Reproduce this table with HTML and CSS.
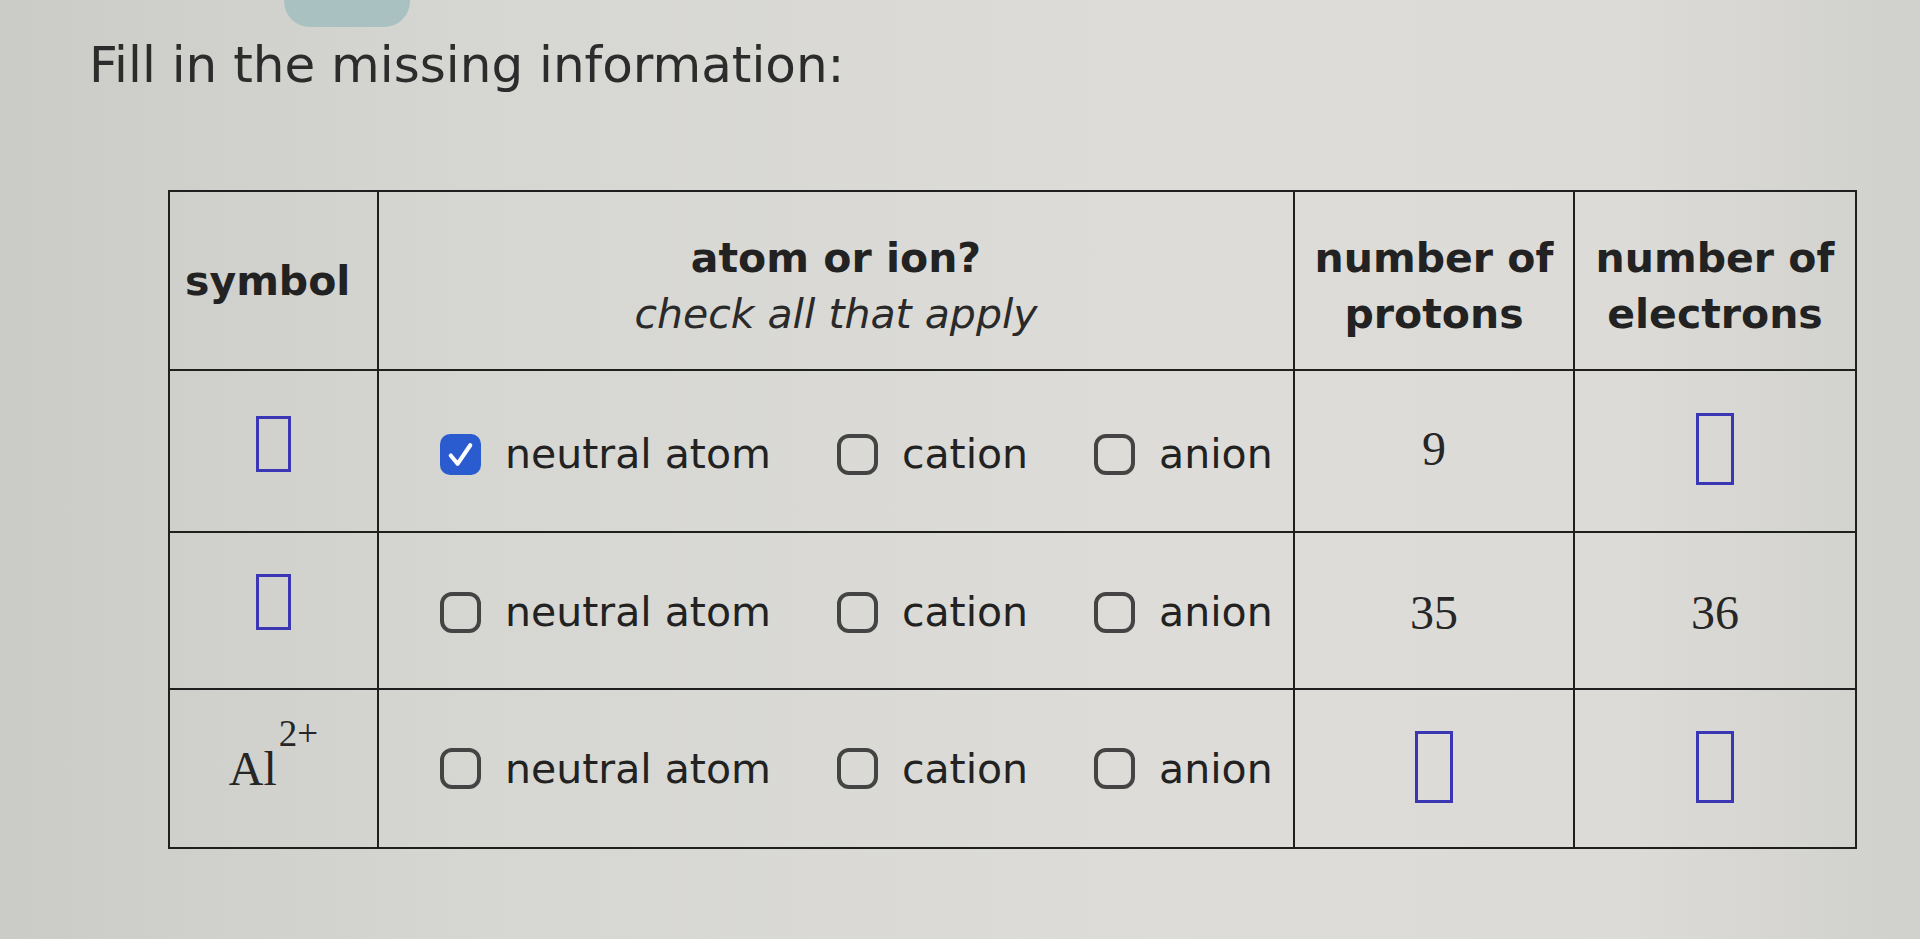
FILE: index.html
```html
<!DOCTYPE html>
<html lang="en">
<head>
<meta charset="utf-8">
<title>Fill in the missing information</title>
<link rel="stylesheet" href="styles.css">
</head>
<body>
<div class="tab"></div>
<h1 class="title">Fill in the missing information:</h1>
<table class="grid">
  <colgroup>
    <col class="c-sym"><col class="c-kind"><col class="c-pro"><col class="c-ele">
  </colgroup>
  <tr class="head">
    <th class="sym-head">symbol</th>
    <th>atom or ion?<br><span class="hint">check all that apply</span></th>
    <th>number of<br>protons</th>
    <th>number of<br>electrons</th>
  </tr>
  <tr class="r1">
    <td class="center"><span class="blank"></span></td>
    <td>
      <div class="opts">
        <label class="opt"><span class="cb checked"><svg viewBox="0 0 42 42" width="42" height="42"><path d="M11 21.5 L18 30 L31 11" fill="none" stroke="#fff" stroke-width="4.2" stroke-linecap="round" stroke-linejoin="round"/></svg></span>neutral atom</label>
        <label class="opt"><span class="cb"></span>cation</label>
        <label class="opt"><span class="cb"></span>anion</label>
      </div>
    </td>
    <td class="center num">9</td>
    <td class="center"><span class="blank tall"></span></td>
  </tr>
  <tr class="r2">
    <td class="center"><span class="blank"></span></td>
    <td>
      <div class="opts">
        <label class="opt"><span class="cb"></span>neutral atom</label>
        <label class="opt"><span class="cb"></span>cation</label>
        <label class="opt"><span class="cb"></span>anion</label>
      </div>
    </td>
    <td class="center num">35</td>
    <td class="center num">36</td>
  </tr>
  <tr class="r3">
    <td class="center num"><span class="ion">Al<sup class="charge">2+</sup></span></td>
    <td>
      <div class="opts">
        <label class="opt"><span class="cb"></span>neutral atom</label>
        <label class="opt"><span class="cb"></span>cation</label>
        <label class="opt"><span class="cb"></span>anion</label>
      </div>
    </td>
    <td class="center"><span class="blank tall"></span></td>
    <td class="center"><span class="blank tall"></span></td>
  </tr>
</table>
</body>
</html>
```
FILE: styles.css
```css
html, body {
  margin: 0;
  padding: 0;
}
body {
  width: 1920px;
  height: 939px;
  overflow: hidden;
  background: linear-gradient(to right, #cbcbc7 0%, #d6d6d2 25%, #dddcd8 60%, #dcdbd7 85%, #d0d0cc 100%);
  font-family: "DejaVu Sans", "Liberation Sans", sans-serif;
  color: #252525;
}
.tab {
  margin-left: 284px;
  width: 126px;
  height: 27px;
  background: #a9c1c0;
  border-radius: 0 0 26px 26px;
}
.title {
  margin: 8px 0 0 89px;
  font-size: 50px;
  line-height: 60px;
  font-weight: normal;
  color: #2c2c2c;
}
.grid {
  margin: 95px 0 0 168px;
  border-collapse: collapse;
  table-layout: fixed;
  width: 1687px;
}
.c-sym { width: 209px; }
.c-kind { width: 916px; }
.c-pro { width: 280px; }
.c-ele { width: 282px; }
.grid th, .grid td {
  border: 2px solid #1f1f1f;
  padding: 0 8px;
  vertical-align: middle;
}
.head th {
  height: 167px;
  font-size: 41px;
  line-height: 56px;
  font-weight: bold;
  text-align: center;
  color: #222;
  padding-top: 10px;
}
.head th.sym-head {
  text-align: left;
  padding-left: 15px;
  padding-top: 0;
}
.hint {
  font-weight: normal;
  font-style: italic;
  color: #2a2a2a;
}
.r1 td { height: 154px; padding-top: 6px; }
.r2 td { height: 152px; padding-top: 3px; }
.r3 td { height: 157px; }
.center { text-align: center; }
.num {
  font-family: "Liberation Serif", "Times New Roman", serif;
  font-size: 48px;
  color: #262626;
}
.r1 .num { padding-top: 0; padding-bottom: 6px; }
.blank {
  display: inline-block;
  box-sizing: border-box;
  width: 35px;
  height: 56px;
  border: 3px solid #3a36b4;
  vertical-align: middle;
  margin-top: -20px;
}
.blank.tall {
  width: 38px;
  height: 72px;
  margin-top: -10px;
}
.r3 .blank.tall { margin-top: -4px; }
.opts {
  display: flex;
  align-items: center;
  padding-left: 53px;
}
.opt {
  display: flex;
  align-items: center;
  gap: 24px;
  font-size: 41px;
  color: #222;
  margin-right: 66px;
}
.opt:last-child { margin-right: 0; }
.cb {
  box-sizing: border-box;
  width: 41px;
  height: 41px;
  border: 4px solid #444;
  border-radius: 12px;
  display: flex;
  flex: none;
}
.cb.checked {
  border: none;
  background: #2b5ccf;
  border-radius: 10px;
}
.ion {
  display: inline-block;
  margin-top: 0;
}
.charge {
  font-size: 37px;
  vertical-align: 0;
  position: relative;
  top: -39px;
  margin-left: 2px;
}
```
